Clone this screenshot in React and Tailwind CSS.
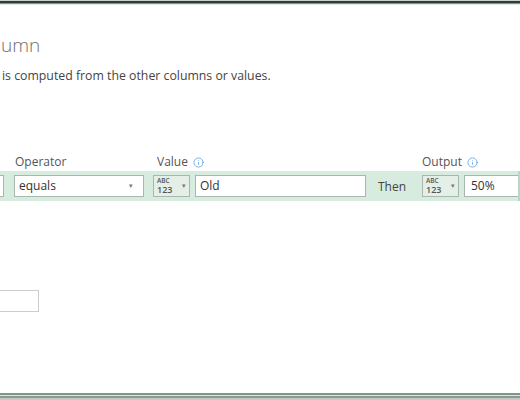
import { Info } from "lucide-react";

const font = { fontFamily: '"Open Sans", "Noto Sans", sans-serif' };

const TypeButton = () => (
  <div className="flex h-[22px] w-[37px] items-center justify-between border border-[#a8b8ae] bg-[#e4efe8] px-[3px]">
    <div className="flex flex-col gap-[1px] text-[#555]">
      <span className="block h-[6px] text-[6.5px] font-semibold leading-[6px]">ABC</span>
      <span className="block h-[9px] text-[9px] font-semibold leading-[9px]">123</span>
    </div>
    <span className="text-[7px] text-[#777]">▾</span>
  </div>
);

const Label = ({ children, info }) => (
  <div className="flex items-center gap-[5px] text-[12px] text-[#555]">
    {children}
    {info && <Info size={11} strokeWidth={1.5} className="text-[#4a90d0]" />}
  </div>
);

export default function App() {
  return (
    <div className="flex h-[400px] w-[520px] flex-col overflow-hidden bg-white" style={font}>
      {/* top window frame */}
      <div className="h-[1px] bg-[#c8cfcb]" />
      <div className="h-[2px] bg-[#2f3a34]" />
      <div className="h-[1px] bg-[#7d9a8c]" />
      <div className="h-[1px] bg-[#dcebe3]" />

      <div className="flex flex-1 flex-col">
        <div className="mt-[31px] pl-[1px] text-[19px] font-light leading-none text-[#6e6e6e]">umn</div>
        <div className="mt-[12px] pl-[2px] text-[12.3px] text-[#444]">is computed from the other columns or values.</div>

        {/* labels */}
        <div className="mt-[69px] flex h-[16px] items-center">
          <div className="ml-[15px] w-[142px]">
            <Label>Operator</Label>
          </div>
          <div className="w-[265px]">
            <Label info>Value</Label>
          </div>
          <Label info>Output</Label>
        </div>

        {/* condition row */}
        <div className="mt-[1px] flex h-[30px] items-center border-r-2 border-[#b9d6c7] bg-[#d7ecdf]">
          <div className="h-[22px] w-[4px] border border-l-0 border-[#a8b8ae] bg-white" />
          <div className="ml-[10px] flex h-[22px] w-[130px] items-center justify-between border border-[#a8b8ae] bg-white pl-[4px] pr-[10px] text-[12px] text-[#333]">
            <span>equals</span>
            <span className="text-[7px] text-[#777]">▾</span>
          </div>
          <div className="ml-[9px]">
            <TypeButton />
          </div>
          <div className="ml-[5px] flex h-[22px] w-[171px] items-center border border-[#a8b8ae] bg-white pl-[4px] text-[12px] text-[#333]">
            Old
          </div>
          <div className="ml-[12px] w-[44px] pt-[1px] text-[12px] text-[#444]">Then</div>
          <TypeButton />
          <div className="ml-[5px] flex h-[22px] flex-1 items-center border border-r-0 border-[#a8b8ae] bg-white pl-[6px] text-[12px] text-[#333]">
            50%
          </div>
        </div>

        {/* lower input */}
        <div className="mt-[89px] h-[22px] w-[39px] border border-l-0 border-[#c9cfcb] bg-white" />
      </div>

      {/* bottom window frame */}
      <div className="h-[2px] bg-[#7f978b]" />
      <div className="h-[1px] bg-[#dce6e0]" />
      <div className="h-[2px] bg-[#8d9a93]" />
      <div className="h-[2px] bg-[#c3cac6]" />
    </div>
  );
}
